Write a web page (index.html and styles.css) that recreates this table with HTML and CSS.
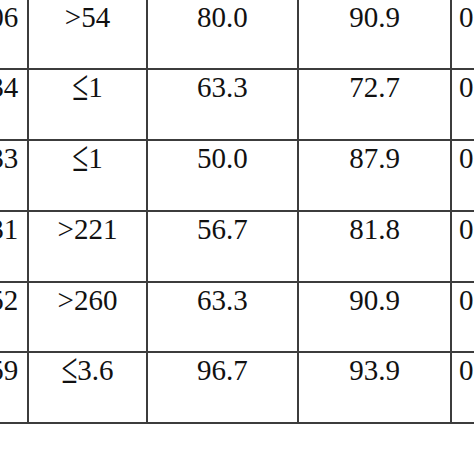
FILE: index.html
```html
<!DOCTYPE html>
<html>
<head>
<meta charset="utf-8">
<link rel="stylesheet" href="styles.css">
</head>
<body>
<div class="table">
  <div class="cell first">0.806</div><div class="cell">&gt;54</div><div class="cell">80.0</div><div class="cell">90.9</div><div class="cell last">0.000</div>
  <div class="cell first">0.734</div><div class="cell"><span class="le">≤</span>1</div><div class="cell">63.3</div><div class="cell">72.7</div><div class="cell last">0.000</div>
  <div class="cell first">0.733</div><div class="cell"><span class="le">≤</span>1</div><div class="cell">50.0</div><div class="cell">87.9</div><div class="cell last">0.000</div>
  <div class="cell first">0.731</div><div class="cell">&gt;221</div><div class="cell">56.7</div><div class="cell">81.8</div><div class="cell last">0.000</div>
  <div class="cell first">0.752</div><div class="cell">&gt;260</div><div class="cell">63.3</div><div class="cell">90.9</div><div class="cell last">0.000</div>
  <div class="cell first">0.959</div><div class="cell"><span class="le">≤</span>3.6</div><div class="cell">96.7</div><div class="cell">93.9</div><div class="cell last">0.000</div>
</div>
</body>
</html>
```
FILE: styles.css
```css
html, body {
  margin: 0;
  padding: 0;
  background: #ffffff;
  overflow: hidden;
}
.table {
  display: grid;
  grid-template-columns: 129.3px 118.4px 151.6px 152.7px 120px;
  grid-auto-rows: 70.8px;
  margin-left: -100px;
  margin-top: -0.5px;
  width: max-content;
  font-family: "Liberation Serif", "Times New Roman", serif;
  font-size: 29px;
  line-height: 30px;
  color: #111111;
}
.cell {
  box-sizing: border-box;
  border-right: 2px solid #3c3c3c;
  border-bottom: 2px solid #3c3c3c;
  padding-top: 2px;
  text-align: center;
  white-space: nowrap;
  overflow: hidden;
}
.first {
  text-align: right;
  padding-right: 9px;
}
.last {
  text-align: left;
  padding-left: 7px;
}
.le {
  display: inline-block;
  line-height: 30px;
  transform-origin: 50% 25px;
  transform: translateY(2.6px) scaleY(1.5);
}
```
